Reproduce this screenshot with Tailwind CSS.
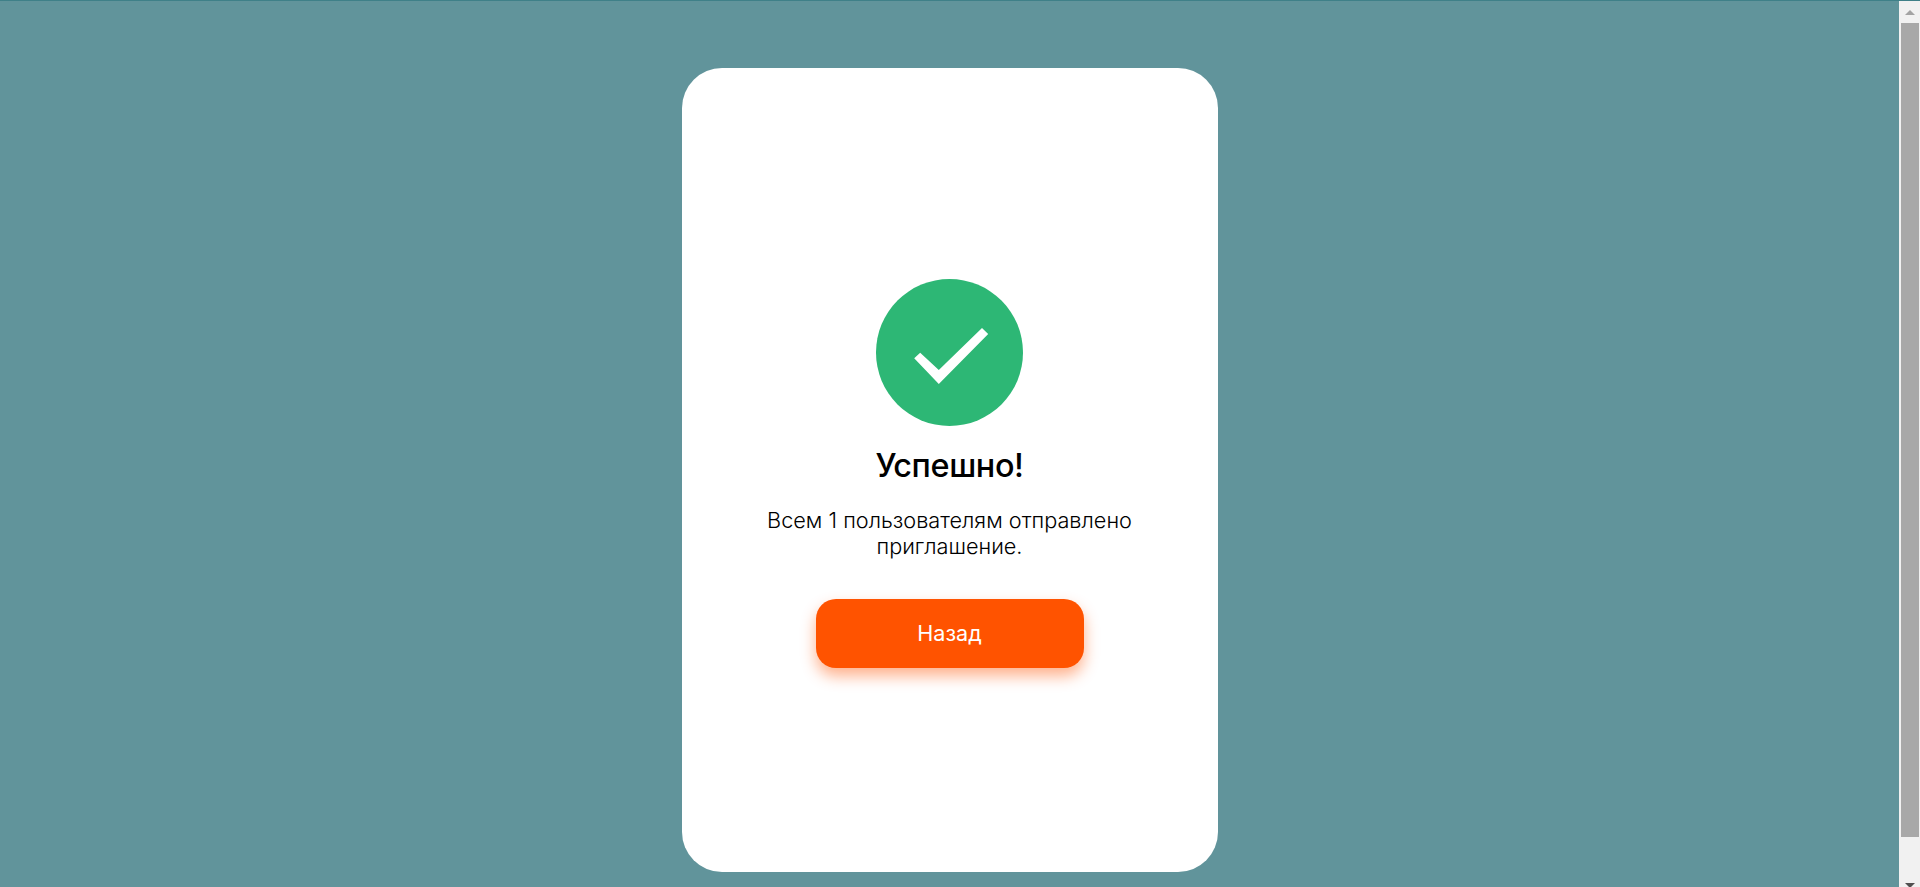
<!DOCTYPE html>
<html lang="ru">
<head>
  <meta charset="UTF-8" />
  <meta name="viewport" content="width=device-width, initial-scale=1.0"/>
  <title>Успешно</title>
  <script src="https://cdn.jsdelivr.net/npm/@tailwindcss/browser@4"></script>
</head>
<body class="h-[887px] overflow-hidden flex flex-col bg-[#61949b] border-t border-[#3f8088] font-['Inter',sans-serif] text-black">
  <div class="flex flex-1">
    <main class="flex-1 pt-[67px]">
      <div class="mx-auto w-[536px] h-[804px] bg-white rounded-[40px] flex flex-col items-center pt-[211px]">
        <!-- галочка -->
        <svg class="w-[147px] h-[147px]" viewBox="0 0 147 147">
          <circle cx="73.5" cy="73.5" r="73.5" fill="#2db775"/>
          <path d="M38.2 79.3 44.2 73.7 62.8 91 106 49 112.2 55 62.8 105Z" fill="#fff"/>
        </svg>
        <h1 class="mt-[16px] text-[32.4px] leading-[48px] font-medium tracking-[-0.4px]">Успешно!</h1>
        <p class="mt-[17px] w-[400px] text-center text-[21.7px] leading-[26px] font-[350]">Всем 1 пользователям отправлено приглашение.</p>
        <button class="mt-[40px] w-[268px] h-[69px] rounded-[20px] bg-[#ff5300] text-white text-[21.6px] shadow-[0_8px_15px_rgba(255,83,0,0.45)]">Назад</button>
      </div>
    </main>

    <!-- полоса прокрутки -->
    <aside class="w-[21px] bg-[#f1f1f1] flex flex-col pl-[2px] pr-[1px]">
      <div class="h-[22px] pl-[4px] pt-[9px]">
        <div class="w-0 h-0 border-x-[5px] border-x-transparent border-b-[5px] border-b-[#a3a3a3]"></div>
      </div>
      <div class="h-[814px] bg-[#a8a8a8]"></div>
      <div class="pl-[4px] pt-[46px]">
        <div class="w-0 h-0 border-x-[5px] border-x-transparent border-t-[5px] border-t-[#505050]"></div>
      </div>
    </aside>
  </div>
</body>
</html>
